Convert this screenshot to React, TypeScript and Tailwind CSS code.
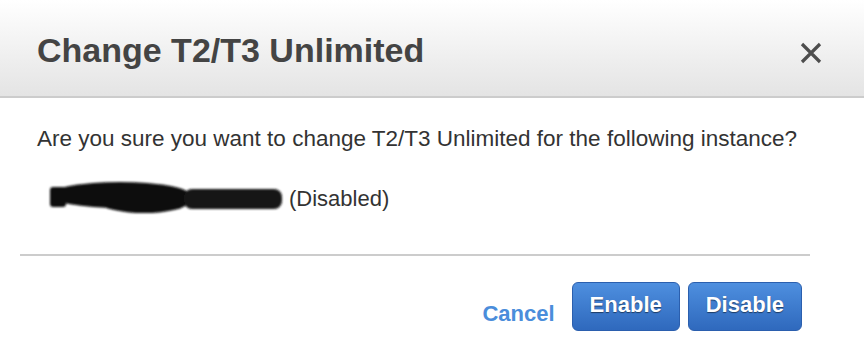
function CloseIcon() {
  return (
    <svg width="22" height="22" viewBox="0 0 22 22" className="mt-[12px]">
      <path d="M2 2 L20 20 M20 2 L2 20" stroke="#4d4d4d" strokeWidth="3.2" fill="none" />
    </svg>
  );
}

// redacted instance id (scribbled over in the screenshot)
function Redacted() {
  return (
    <svg width="240" height="48" viewBox="0 0 240 48" className="-my-[10px] ml-[7px] shrink-0">
      <defs>
        <filter id="smudge" x="-10%" y="-30%" width="120%" height="160%">
          <feGaussianBlur stdDeviation="1.3" />
        </filter>
      </defs>
      <g filter="url(#smudge)">
        <ellipse cx="76" cy="20" rx="70" ry="13" fill="#0a0a0a" />
        <ellipse cx="100" cy="27" rx="44" ry="11" fill="#0a0a0a" />
        <rect x="140" y="14" width="98" height="20" rx="8" fill="#151515" />
        <rect x="6" y="12" width="16" height="20" rx="3" fill="#111" />
      </g>
    </svg>
  );
}

export default function App() {
  return (
    <div className="w-[864px] h-[362px] overflow-hidden bg-white font-['Liberation_Sans',Arial,sans-serif]">
      <div className="h-[98px] flex items-start justify-between pl-[37px] pr-[42px] pt-[30px] bg-gradient-to-b from-[#ffffff] to-[#e4e4e4] border-b-2 border-[#cccccc]">
        <h1 className="text-[34px] leading-[40px] font-bold text-[#444444]">
          Change T2/T3 Unlimited
        </h1>
        <CloseIcon />
      </div>

      <div className="pl-[37px] pt-[27px] text-[22px] leading-[28px] text-[#333333]">
        <p className="text-[22.5px]">Are you sure you want to change T2/T3 Unlimited for the following instance?</p>
        <div className="mt-[32px] h-[28px] flex items-center">
          <Redacted />
          <span className="ml-[5px]">(Disabled)</span>
        </div>
      </div>

      <div className="mt-[41px] ml-[20px] w-[790px] border-t-2 border-[#cccccc] flex justify-end items-start pr-[8px] pt-[26px]">
        <button className="mt-[18px] mr-[17px] text-[22px] leading-[28px] font-bold text-[#4a8ddb]">
          Cancel
        </button>
        <button className="h-[49px] px-[17px] pt-[9px] pb-[13px] text-[22px] leading-[25px] font-bold text-white rounded-[6px] border border-[#2b5fae] bg-gradient-to-b from-[#4e8fdf] to-[#2f69bd] [text-shadow:0_1px_1px_rgba(0,0,0,0.5)]">
          Enable
        </button>
        <button className="ml-[8px] h-[49px] px-[17px] pt-[9px] pb-[13px] text-[22px] leading-[25px] font-bold text-white rounded-[6px] border border-[#2b5fae] bg-gradient-to-b from-[#4e8fdf] to-[#2f69bd] [text-shadow:0_1px_1px_rgba(0,0,0,0.5)]">
          Disable
        </button>
      </div>
    </div>
  );
}
